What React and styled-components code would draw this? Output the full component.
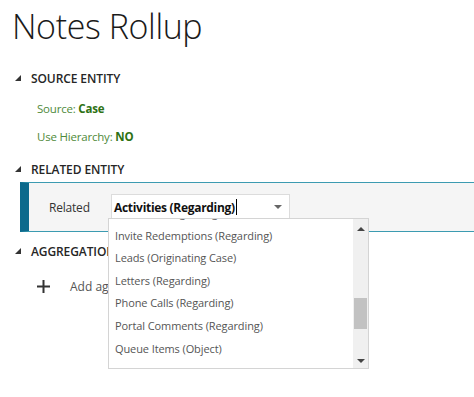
import styled, { createGlobalStyle } from "styled-components";

const GlobalStyle = createGlobalStyle`
  html, body {
    margin: 0;
    padding: 0;
    background: #ffffff;
    font-family: "Open Sans", "Noto Sans", sans-serif;
  }
`;

const Page = styled.div`
  width: 474px;
  height: 397px;
  position: relative;
  overflow: hidden;
`;

const Title = styled.h1`
  margin: 0;
  padding: 4px 0 0 12px;
  font-size: 34px;
  font-weight: 300;
  line-height: 44px;
  color: #1a1a1a;
  letter-spacing: -0.4px;
`;

const Section = styled.div`
  display: flex;
  flex-direction: column;
`;

const SectionHeader = styled.div`
  display: flex;
  align-items: center;
  gap: 10px;
  height: 20px;
  padding-left: 15px;
  margin-top: ${(p) => p.$top || 0}px;
  font-size: 12px;
  font-weight: 600;
  color: #262626;
  letter-spacing: -0.1px;
`;

const Field = styled.div`
  padding-left: 37px;
  height: 20px;
  line-height: 20px;
  margin-top: ${(p) => p.$top || 0}px;
  font-size: 11.5px;
  color: #4f8a3a;
  letter-spacing: -0.2px;

  b {
    font-weight: 700;
    color: #2e7214;
  }
`;

const Panel = styled.div`
  margin: 3px 0 0 20px;
  height: 48px;
  display: flex;
  align-items: center;
  background: #f5f5f5;
  border-top: 1px solid #3c9bb1;
  border-bottom: 1px solid #3c9bb1;
  border-left: 9px solid #0d6a8c;
  position: relative;
`;

const PanelLabel = styled.div`
  width: 62px;
  padding-left: 20px;
  font-size: 12px;
  color: #333;
  letter-spacing: -0.2px;
`;

const SelectBox = styled.div`
  width: 175px;
  height: 24px;
  border: 1px solid #dcdcdc;
  background: #fff;
  display: flex;
  align-items: center;
  padding-left: 2px;
  font-size: 12px;
  font-weight: 700;
  color: #111;
  letter-spacing: -0.3px;
  position: relative;
`;

const Caret = styled.span`
  display: inline-block;
  width: 1px;
  height: 16px;
  background: #000;
  margin-left: 1px;
`;

const Arrow = styled.div`
  position: absolute;
  right: 7px;
  top: 10px;
  width: 0;
  height: 0;
  border-left: 4px solid transparent;
  border-right: 4px solid transparent;
  border-top: 4px solid #666;
`;

const Menu = styled.div`
  position: absolute;
  left: 108px;
  top: 218px;
  width: 259px;
  height: 149px;
  background: #fff;
  border: 1px solid #d4d4d4;
  display: flex;
  overflow: hidden;
  z-index: 2;
`;

const MenuList = styled.div`
  flex: 1;
  display: flex;
  flex-direction: column;
  padding-left: 6px;
  margin-top: -17px;
`;

const MenuItem = styled.div`
  height: 22.6px;
  line-height: 22.6px;
  font-size: 11px;
  color: #555;
  white-space: nowrap;
  letter-spacing: -0.1px;
`;

const ScrollTrack = styled.div`
  width: 15px;
  background: #f0f0f0;
  display: flex;
  flex-direction: column;
  align-items: center;
  justify-content: space-between;
  padding: 8px 0 5px;
  position: relative;
`;

const Thumb = styled.div`
  position: absolute;
  left: 1px;
  top: 79px;
  width: 13px;
  height: 31px;
  background: #c2c2c2;
`;

const ScrollArrow = styled.div`
  width: 0;
  height: 0;
  border-left: 4px solid transparent;
  border-right: 4px solid transparent;
  ${(p) =>
    p.$up ? "border-bottom: 4px solid #444;" : "border-top: 4px solid #444;"}
`;

const AddRow = styled.div`
  display: flex;
  align-items: center;
  gap: 20px;
  padding-left: 37px;
  margin-top: 17px;
  font-size: 12px;
  color: #555;
`;

const Tri = () => (
  <svg width="6" height="6" viewBox="0 0 6 6">
    <polygon points="0,6 6,6 6,0" fill="#333" />
  </svg>
);

const Plus = () => (
  <svg width="13" height="13" viewBox="0 0 13 13">
    <rect x="5.5" y="0" width="2" height="13" fill="#333" />
    <rect x="0" y="5.5" width="13" height="2" fill="#333" />
  </svg>
);

const items = [
  "Incidents (Regarding)",
  "Invite Redemptions (Regarding)",
  "Leads (Originating Case)",
  "Letters (Regarding)",
  "Phone Calls (Regarding)",
  "Portal Comments (Regarding)",
  "Queue Items (Object)",
];

export default function App() {
  return (
    <Page>
      <GlobalStyle />
      <Title>Notes Rollup</Title>
      <Section>
        <SectionHeader $top={20}>
          <Tri />
          SOURCE ENTITY
        </SectionHeader>
        <Field $top={11}>
          Source: <b>Case</b>
        </Field>
        <Field $top={8}>
          Use Hierarchy: <b>NO</b>
        </Field>
        <SectionHeader $top={12}>
          <Tri />
          RELATED ENTITY
        </SectionHeader>
        <Panel>
          <PanelLabel>Related</PanelLabel>
          <SelectBox>
            Activities (Regarding)
            <Caret />
            <Arrow />
          </SelectBox>
        </Panel>
        <SectionHeader $top={9}>
          <Tri />
          AGGREGATION
        </SectionHeader>
        <AddRow>
          <Plus />
          Add aggregation
        </AddRow>
      </Section>
      <Menu>
        <MenuList>
          {items.map((t) => (
            <MenuItem key={t}>{t}</MenuItem>
          ))}
        </MenuList>
        <ScrollTrack>
          <ScrollArrow $up />
          <Thumb />
          <ScrollArrow />
        </ScrollTrack>
      </Menu>
    </Page>
  );
}
